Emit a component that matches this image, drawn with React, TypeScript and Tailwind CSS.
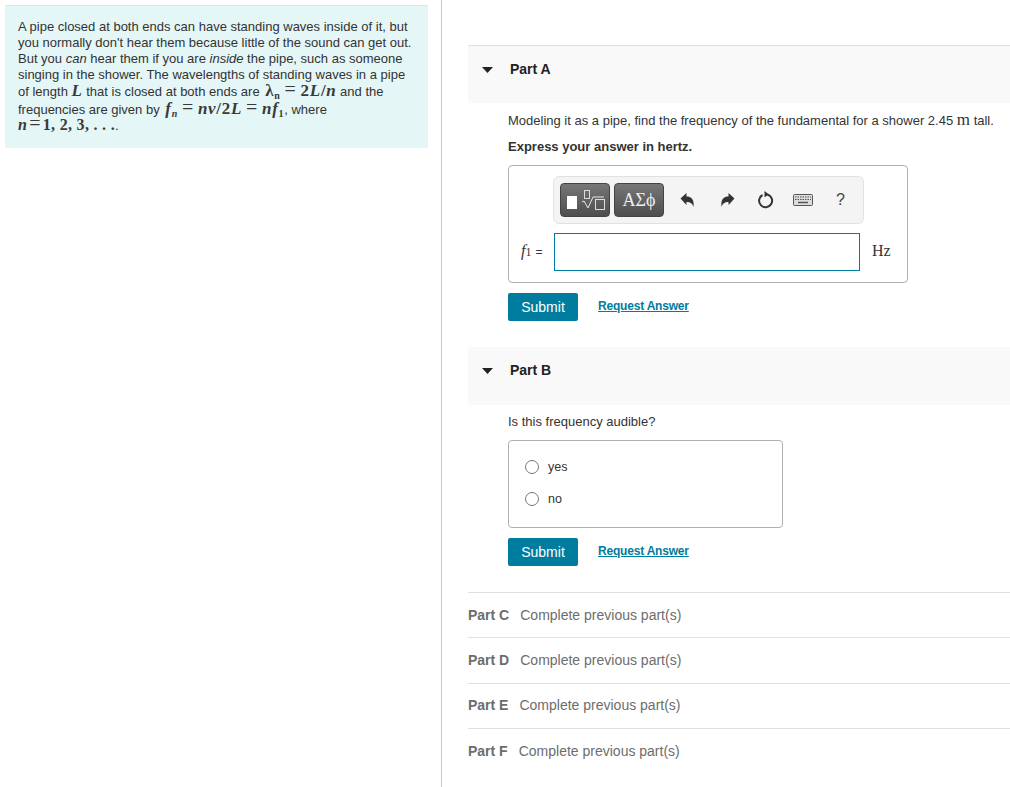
import { ReactNode } from 'react'

const sans = { fontFamily: '"Liberation Sans", Arial, sans-serif' }

function M({ children }: { children: ReactNode }) {
  return (
    <span className="font-['Liberation_Serif',serif] text-[17px] leading-[0] font-bold tracking-[0.7px] text-[#3a3a3a]">
      {children}
    </span>
  )
}

function I({ children }: { children: ReactNode }) {
  return <i className="font-['Liberation_Serif',serif]">{children}</i>
}

function Sub({ children }: { children: ReactNode }) {
  return <sub className="text-[10px] leading-[0]">{children}</sub>
}

function Eq() {
  return <span className="mx-[4px] text-[20px] leading-[0] font-normal">=</span>
}

function PartHeader({ label, bordered }: { label: string; bordered?: boolean }) {
  return (
    <div className={`flex h-[58px] items-start bg-[#f9f9f9] pl-[14px] pt-[15px] ${bordered ? 'border-t border-[#e0e0e0]' : ''}`}>
      <svg width="11" height="6" viewBox="0 0 11 6" className="mt-[6px]" aria-hidden="true">
        <path d="M0 0h11L5.5 6z" fill="#222" />
      </svg>
      <span className="ml-[17px] text-[14px] leading-[16px] font-bold text-[#222]">{label}</span>
    </div>
  )
}

function SubmitRow() {
  return (
    <div className="flex items-start">
      <button type="button" className="h-[28px] w-[70px] rounded-[2px] bg-[#007c9e] text-[14px] text-white">
        Submit
      </button>
      <a className="ml-[20px] mt-[5px] text-[12px] leading-[16px] font-bold tracking-[-0.2px] text-[#007c9e] underline">Request Answer</a>
    </div>
  )
}

function LockedPart({ label }: { label: string }) {
  return (
    <div className="flex h-[45.4px] items-center border-t border-[#e0e0e0] text-[14px] text-[#6d6d6d]">
      <span className="font-bold">{label}</span>
      <span className="ml-[11px]">Complete previous part(s)</span>
    </div>
  )
}

function MathToolbar() {
  return (
    <div className="ml-[44px] flex h-[48px] w-[311px] items-center rounded-[6px] border border-[#e2e2e2] bg-[#f4f4f4] pl-[6px]">
      <div className="flex h-[34px] w-[50px] items-center justify-center rounded-[4px] border border-[#444] bg-gradient-to-b from-[#777] to-[#4e4e4e]">
        <svg width="48" height="32" viewBox="0 0 48 32" aria-hidden="true">
          <rect x="6" y="12" width="10" height="13" fill="#fff" />
          <rect x="23.5" y="6.5" width="5" height="8" fill="none" stroke="#ddd" />
          <path d="M21 18l2-1 4 7 5-11h11" fill="none" stroke="#e8e8e8" />
          <rect x="34.5" y="15.5" width="9" height="10" fill="none" stroke="#ddd" />
        </svg>
      </div>
      <div className="ml-[4px] flex h-[34px] w-[50px] items-center justify-center rounded-[4px] border border-[#444] bg-gradient-to-b from-[#777] to-[#4e4e4e] font-['Liberation_Serif',serif] text-[18px] text-[#eee]">
        ΑΣϕ
      </div>
      <svg width="16" height="16" viewBox="0 0 16 16" className="ml-[16px]" aria-hidden="true">
        <path d="M0.5 6.5L6.5 1v3.5c4.5 0 8 2.5 7 10.5-1-3.5-3-5-7-5v3z" fill="#333" />
      </svg>
      <svg width="16" height="16" viewBox="0 0 16 16" className="ml-[23px]" aria-hidden="true">
        <path d="M15.5 6.5L9.5 1v3.5c-4.5 0-8 2.5-7 10.5 1-3.5 3-5 7-5v3z" fill="#333" />
      </svg>
      <svg width="18" height="18" viewBox="0 0 18 18" className="ml-[22px]" aria-hidden="true">
        <path d="M5.5 4a6.5 6.5 0 1 0 5-.5" fill="none" stroke="#333" strokeWidth="2" />
        <path d="M7.5 0l4.5 3.4-4.5 2.8z" fill="#333" />
      </svg>
      <svg width="20" height="12" viewBox="0 0 20 12" className="ml-[18px]" aria-hidden="true">
        <rect x="0.5" y="0.5" width="19" height="11" rx="1" fill="#ddd" stroke="#555" />
        <path d="M2 3h16M2 5.5h16" stroke="#555" strokeDasharray="1.5 1" />
        <path d="M5 8.5h10" stroke="#555" strokeWidth="1.5" />
      </svg>
      <span className="ml-[23px] text-[16px] text-[#444]">?</span>
    </div>
  )
}

export default function App() {
  return (
    <div className="flex h-[787px] w-[1010px] overflow-hidden bg-white text-[#333]" style={sans}>
      <div className="h-full w-[442px] shrink-0 border-r border-[#c7ccd1] pl-[5px] pt-[5px]">
        <div className="h-[143px] w-[423px] border-t border-[#dfe3e6] bg-[#e5f6f7] px-[13px] pt-[13px] text-[13px] leading-[16px] text-[#333]">
          <p>A pipe closed at both ends can have standing waves inside of it, but</p>
          <p>you normally don't hear them because little of the sound can get out.</p>
          <p>
            But you <em>can</em> hear them if you are <em>inside</em> the pipe, such as someone
          </p>
          <p>singing in the shower. The wavelengths of standing waves in a pipe</p>
          <p className="h-[18px] pt-[1px]">
            of length <M><I>L</I></M> that is closed at both ends are <span className="ml-[2px]"><M>λ<Sub>n</Sub><Eq />2<I>L</I>/<I>n</I></M></span> and the
          </p>
          <p className="h-[16px] pt-[1px]">
            frequencies are given by <span className="ml-[2px]"><M><I>f<Sub>n</Sub></I><Eq /><I>nv</I>/2<I>L</I><Eq /><I>nf</I><Sub>1</Sub></M></span>, where
          </p>
          <p className="h-[16px] pt-[1px]">
            <span className="font-['Liberation_Serif',serif] text-[16px] leading-[0] font-bold tracking-[0.3px] text-[#3a3a3a]">
              <I>n</I><span className="mx-[2px] text-[20px] leading-[0] font-normal">=</span>1, 2, 3, . . .
            </span>.
          </p>
        </div>
      </div>

      <div className="ml-[26px] flex-1 pt-[45px]">
        <PartHeader label="Part A" bordered />
        <div className="pl-[40px]">
          <p className="mt-[10px] text-[13px] leading-[16px] whitespace-nowrap">
            Modeling it as a pipe, find the frequency of the fundamental for a shower 2.45 <span className="font-['Liberation_Serif',serif] text-[17px] leading-[0]">m</span> tall.
          </p>
          <p className="mt-[10px] text-[13px] leading-[16px] font-bold">Express your answer in hertz.</p>

          <div className="mt-[10px] h-[118px] w-[400px] rounded-[4px] border border-[#b0b0b0] pt-[10px]">
            <MathToolbar />
            <div className="mt-[9px] flex items-center">
              <span className="mb-[2px] ml-[12px] w-[33px] text-[12px]">
                <i className="font-['Liberation_Serif',serif] text-[16px]">f</i>
                <span className="font-['Liberation_Serif',serif] text-[12px]">1</span>
                <span className="ml-[4px]">=</span>
              </span>
              <div className="h-[38px] w-[306px] border border-[#007c9e] bg-white" />
              <span className="mb-[2px] ml-[12px] font-['Liberation_Serif',serif] text-[16px] text-[#333]">Hz</span>
            </div>
          </div>

          <div className="mt-[10px]">
            <SubmitRow />
          </div>
        </div>

        <div className="mt-[26px]">
          <PartHeader label="Part B" />
        </div>
        <div className="pl-[40px]">
          <p className="mt-[9px] text-[13px] leading-[16px]">Is this frequency audible?</p>
          <div className="mt-[10px] h-[88px] w-[275px] rounded-[4px] border border-[#b0b0b0] pl-[16px] pt-[16px] text-[12.5px] leading-[20px]">
            <label className="flex h-[20px] items-center">
              <span className="h-[14px] w-[14px] rounded-full border border-[#777]" />
              <span className="ml-[9px]">yes</span>
            </label>
            <label className="mt-[12px] flex h-[20px] items-center">
              <span className="h-[14px] w-[14px] rounded-full border border-[#777]" />
              <span className="ml-[9px]">no</span>
            </label>
          </div>
          <div className="mt-[10px]">
            <SubmitRow />
          </div>
        </div>

        <div className="mt-[26px]">
          <LockedPart label="Part C" />
          <LockedPart label="Part D" />
          <LockedPart label="Part E" />
          <LockedPart label="Part F" />
        </div>
      </div>
    </div>
  )
}
